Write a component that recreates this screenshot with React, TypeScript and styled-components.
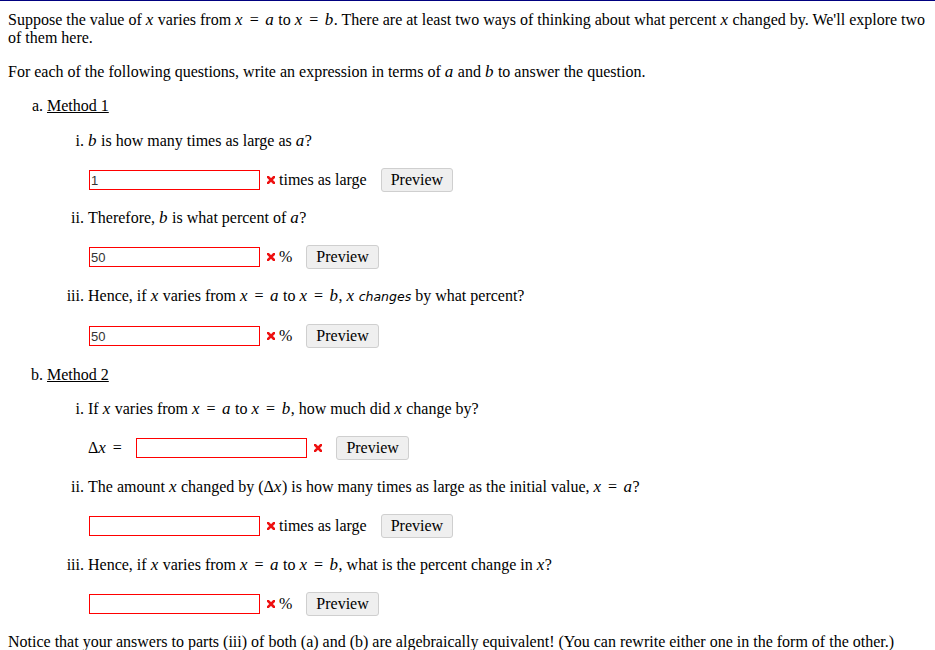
import React from 'react'
import styled, { createGlobalStyle } from 'styled-components'

const GlobalStyle = createGlobalStyle`
  html, body {
    margin: 0;
    padding: 0;
    background: #fff;
  }
  body {
    font-family: "Liberation Serif", "Times New Roman", serif;
    font-size: 16px;
    color: #000;
  }
`

const Page = styled.div`
  border-top: 1px solid #000080;
  padding: 10px 8px 0 8px;
  line-height: 18px;
`

const Para = styled.p<{ $gap?: number }>`
  margin: 0 0 ${(p) => (p.$gap ?? 16)}px 0;
`

const OuterList = styled.ol`
  list-style-type: lower-alpha;
  margin: 0;
  padding-left: 39px;
`

const InnerList = styled.ol`
  list-style-type: lower-roman;
  margin: 0;
  padding-left: 41px;
`

const Item = styled.li`
  margin: 0;
`

const Heading = styled.div<{ $gap: number }>`
  margin-bottom: ${(p) => p.$gap}px;
`

const MethodLink = styled.a`
  color: #000;
  text-decoration: underline;
  cursor: pointer;
`

const Question = styled.div`
  margin-bottom: 18px;
`

const AnswerRow = styled.div<{ $gap: number }>`
  display: flex;
  align-items: center;
  height: 24px;
  margin-bottom: ${(p) => p.$gap}px;
  padding-left: 1px;
`

const Mi = styled.span`
  font-style: italic;
  font-family: "Liberation Serif", "DejaVu Serif", serif;
  font-size: 17px;
  padding-right: 0.5px;
`

const Mo = styled.span`
  margin: 0 6.5px;
`

const Emph = styled.span`
  font-family: "DejaVu Sans", Verdana, sans-serif;
  font-style: oblique;
  font-size: 12.5px;
`

const Lead = styled.span`
  margin-right: 8px;
  margin-left: -1px;
`

const Field = styled.input`
  box-sizing: border-box;
  width: 171px;
  height: 20px;
  border: 1px solid #ff0000;
  padding: 0 1px;
  margin: 0;
  font-family: "Liberation Sans", Arial, sans-serif;
  font-size: 13px;
  color: #333;
  outline: none;
`

const Mark = styled.svg`
  margin-left: 7px;
  flex: none;
`

const Unit = styled.span`
  margin-left: 4px;
`

const PreviewButton = styled.button`
  margin-left: 14px;
  height: 24px;
  padding: 0 9px;
  border: 1px solid #cfcfcf;
  border-radius: 3px;
  background: #efefef;
  font-family: "Liberation Serif", "Times New Roman", serif;
  font-size: 16px;
  color: #000;
`

const Wrong = () => (
  <Mark width="8" height="8" viewBox="0 0 8 8">
    <path d="M1 1 L7 7 M7 1 L1 7" stroke="#ee1111" strokeWidth="2.6" strokeLinecap="square" />
  </Mark>
)

const X = () => <Mi>x</Mi>
const Eq = () => <Mo>=</Mo>

type RowProps = { value?: string; unit?: string; lead?: React.ReactNode; gap: number }

const Answer = ({ value, unit, lead, gap }: RowProps) => (
  <AnswerRow $gap={gap}>
    {lead && <Lead>{lead}</Lead>}
    <Field defaultValue={value ?? ''} />
    <Wrong />
    {unit && <Unit>{unit}</Unit>}
    <PreviewButton>Preview</PreviewButton>
  </AnswerRow>
)

const FromAtoB = () => (
  <>
    <X /> varies from <X />
    <Eq />
    <Mi>a</Mi> to <X />
    <Eq />
    <Mi>b</Mi>
  </>
)

export default function App() {
  return (
    <>
      <GlobalStyle />
      <Page>
        <Para>
          Suppose the value of <X /> varies from <X />
          <Eq />
          <Mi>a</Mi> to <X />
          <Eq />
          <Mi>b</Mi>. There are at least two ways of thinking about what percent <X /> changed by.
          We'll explore two of them here.
        </Para>
        <Para $gap={16}>
          For each of the following questions, write an expression in terms of <Mi>a</Mi> and{' '}
          <Mi>b</Mi> to answer the question.
        </Para>
        <OuterList>
          <Item>
            <Heading $gap={17}>
              <MethodLink>Method 1</MethodLink>
            </Heading>
            <InnerList>
              <Item>
                <Question>
                  <Mi>b</Mi> is how many times as large as <Mi>a</Mi>?
                </Question>
                <Answer value="1" unit="times as large" gap={17} />
              </Item>
              <Item>
                <Question>
                  Therefore, <Mi>b</Mi> is what percent of <Mi>a</Mi>?
                </Question>
                <Answer value="50" unit="%" gap={18} />
              </Item>
              <Item>
                <Question>
                  Hence, if <FromAtoB />, <X /> <Emph>changes</Emph> by what percent?
                </Question>
                <Answer value="50" unit="%" gap={18} />
              </Item>
            </InnerList>
          </Item>
          <Item>
            <Heading $gap={16}>
              <MethodLink>Method 2</MethodLink>
            </Heading>
            <InnerList>
              <Item>
                <Question>
                  If <FromAtoB />, how much did <X /> change by?
                </Question>
                <Answer
                  lead={
                    <>
                      Δ<X />
                      <Eq />
                    </>
                  }
                  gap={18}
                />
              </Item>
              <Item>
                <Question>
                  The amount <X /> changed by (Δ<X />) is how many times as large as the initial
                  value, <X />
                  <Eq />
                  <Mi>a</Mi>?
                </Question>
                <Answer unit="times as large" gap={18} />
              </Item>
              <Item>
                <Question>
                  Hence, if <FromAtoB />, what is the percent change in <X />?
                </Question>
                <Answer unit="%" gap={17} />
              </Item>
            </InnerList>
          </Item>
        </OuterList>
        <Para>
          Notice that your answers to parts (iii) of both (a) and (b) are algebraically equivalent!
          (You can rewrite either one in the form of the other.)
        </Para>
      </Page>
    </>
  )
}
